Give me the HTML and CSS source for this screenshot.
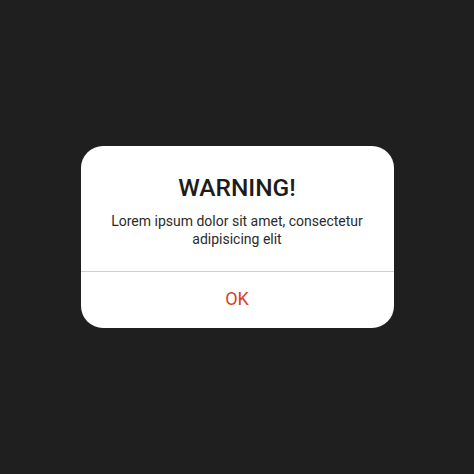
FILE: index.html
```html
<!DOCTYPE html>
<html>
<head>
<meta charset="utf-8">
<link rel="stylesheet" href="styles.css">
</head>
<body>
<div class="screen">
  <div class="dialog">
    <div class="content">
      <h1 class="title">WARNING!</h1>
      <p class="message">Lorem ipsum dolor sit amet, consectetur<br>adipisicing elit</p>
    </div>
    <div class="actions">
      <span class="ok">OK</span>
    </div>
  </div>
</div>
</body>
</html>
```
FILE: styles.css
```css
html, body {
  margin: 0;
  padding: 0;
  background: #1f1f1f;
}
.screen {
  width: 474px;
  height: 474px;
  display: flex;
  align-items: center;
  justify-content: center;
  font-family: Roboto, "Liberation Sans", sans-serif;
}
.dialog {
  width: 313px;
  height: 182px;
  background: #ffffff;
  border-radius: 22px;
  display: flex;
  flex-direction: column;
  overflow: hidden;
}
.content {
  height: 126px;
  box-sizing: border-box;
  padding-top: 27px;
  text-align: center;
  border-bottom: 1px solid #cfcfcf;
}
.title {
  margin: 0;
  font-size: 24.5px;
  font-weight: 500;
  line-height: 29px;
  color: #1c1c1c;
}
.message {
  margin: 10px 0 0;
  font-size: 14px;
  line-height: 18px;
  color: #2b2b2b;
}
.actions {
  flex: 1;
  display: flex;
  align-items: center;
  justify-content: center;
}
.ok {
  font-size: 18px;
  color: #d8412a;
  margin-bottom: 4px;
}
```
